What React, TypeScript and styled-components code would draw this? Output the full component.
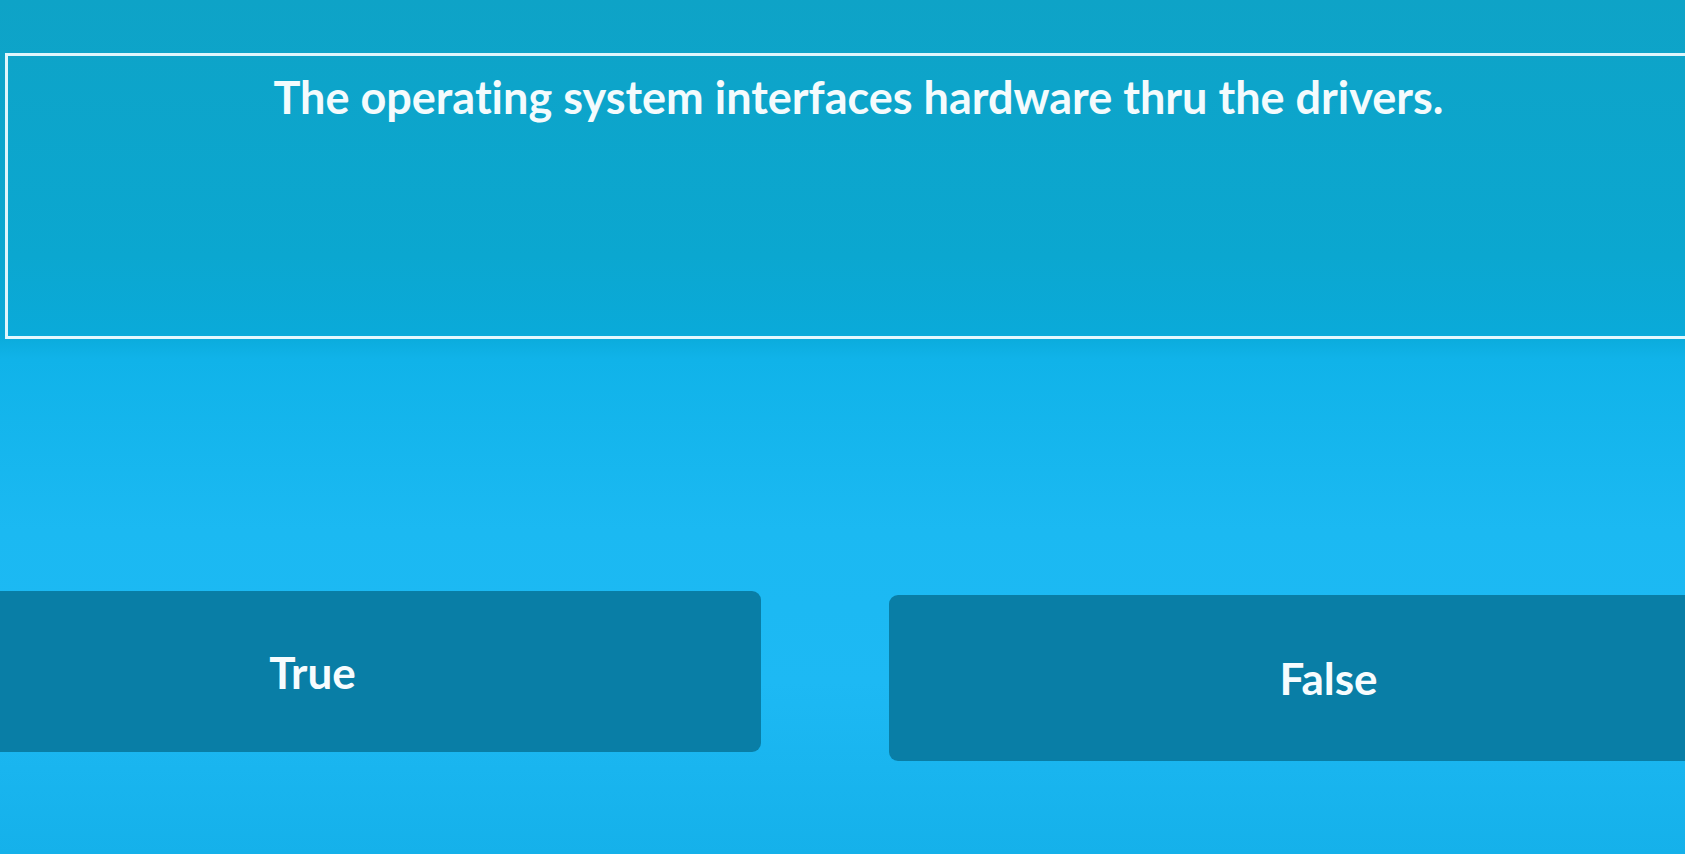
import React from "react";
import styled, { createGlobalStyle } from "styled-components";

const Global = createGlobalStyle`
  html, body {
    margin: 0;
    padding: 0;
    width: 100%;
    height: 100%;
    overflow: hidden;
  }
  body {
    font-family: Lato, "Open Sans", "Liberation Sans", sans-serif;
    background: #16b3ec;
  }
`;

const Page = styled.main`
  width: 1685px;
  height: 854px;
  overflow: hidden;
  display: flex;
  flex-direction: column;
  background: linear-gradient(
    180deg,
    #0ea3c7 0%,
    #0ba7d0 30%,
    #0aaad9 39%,
    #10b3e9 42%,
    #1bb9f2 62%,
    #1db9f4 80%,
    #15b1ea 100%
  );
`;

const Header = styled.div`
  padding-top: 53px;
`;

const QuestionCard = styled.section`
  margin-left: 5px;
  margin-right: -24px;
  height: 286px;
  border-top: 3px solid #dff6fc;
  border-left: 3px solid #dff6fc;
  border-bottom: 3px solid #e4f8fe;
  display: flex;
  justify-content: center;
  align-items: flex-start;
  padding-top: 13px;
  box-sizing: border-box;
`;

const QuestionText = styled.h1`
  margin: 0;
  color: #f4fbfd;
  font-family: Lato, "Open Sans", sans-serif;
  font-weight: 700;
  font-size: 45px;
  line-height: 56px;
  letter-spacing: 0;
  font-variant-ligatures: none;
`;

const Answers = styled.div`
  margin-top: 252px;
  margin-left: -127px;
  margin-right: -92px;
  display: grid;
  grid-template-columns: 1fr 1fr;
  column-gap: 128px;
  align-items: start;
`;

const AnswerButton = styled.button<{ $shift?: number; $tall?: number }>`
  height: ${(p) => p.$tall ?? 161}px;
  margin-top: ${(p) => p.$shift ?? 0}px;
  border: none;
  border-radius: 9px;
  background: #097ea6;
  color: #f7fcfe;
  font-family: Lato, "Open Sans", sans-serif;
  font-weight: 700;
  font-size: 44px;
  display: flex;
  align-items: center;
  justify-content: center;
  padding: 0 9px 0 0;
  cursor: pointer;
`;

export default function App() {
  return (
    <>
      <Global />
      <Page>
        <Header>
          <QuestionCard>
            <QuestionText>
              The operating system interfaces hardware thru the drivers.
            </QuestionText>
          </QuestionCard>
        </Header>
        <Answers>
          <AnswerButton>True</AnswerButton>
          <AnswerButton $shift={4} $tall={166}>
            False
          </AnswerButton>
        </Answers>
      </Page>
    </>
  );
}
